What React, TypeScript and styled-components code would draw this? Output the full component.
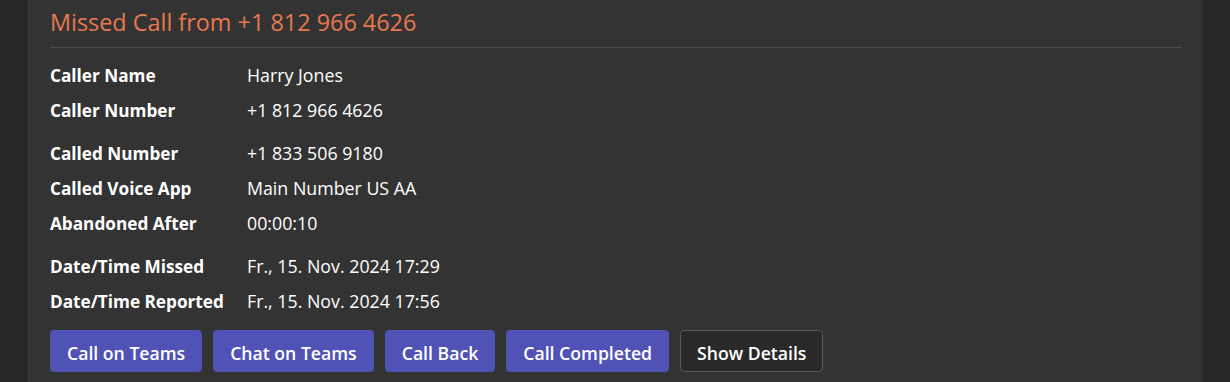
import React from "react";
import styled, { createGlobalStyle } from "styled-components";

const GlobalStyle = createGlobalStyle`
  html, body {
    margin: 0;
    padding: 0;
    background: #272727;
    font-family: "Open Sans", "Noto Sans", sans-serif;
  }
`;

const Page = styled.div`
  height: 382px;
  padding: 0 26px 0 27px;
  overflow: hidden;
`;

const Card = styled.section`
  height: 100%;
  background: #333333;
  border-left: 1px solid #2c2c2c;
  border-right: 1px solid #2a2a2a;
  padding: 6px 21px 0 22px;
  box-sizing: border-box;
`;

const Title = styled.h2`
  margin: 0;
  padding-bottom: 9px;
  font-size: 23.4px;
  font-weight: 400;
  line-height: 32px;
  color: #e8784f;
  border-bottom: 1px solid #4b4b4b;
`;

const Details = styled.div`
  padding-top: 9px;
  display: flex;
  flex-direction: column;
  gap: 8px;
`;

const Group = styled.dl`
  margin: 0;
  display: grid;
  grid-template-columns: 197px 1fr;
  grid-auto-rows: 35px;
  align-items: center;
`;

const Label = styled.dt`
  font-size: 17.2px;
  font-weight: 700;
  color: #ffffff;
  padding-top: 1px;
`;

const Value = styled.dd`
  margin: 0;
  font-size: 17.8px;
  font-weight: 400;
  color: #ffffff;
`;

const Actions = styled.div`
  display: flex;
  gap: 11px;
  margin-top: 12px;
`;

const Button = styled.button<{ $secondary?: boolean }>`
  height: 42px;
  padding: 3px 16px 0;
  border-radius: 4px;
  border: 1px solid ${(p) => (p.$secondary ? "#5a5a5a" : "#5053b5")};
  background: ${(p) => (p.$secondary ? "#292929" : "#5053b5")};
  color: #ffffff;
  font-family: inherit;
  font-size: 17.65px;
  font-weight: 600;
  cursor: pointer;
`;

const groups: [string, string][][] = [
  [
    ["Caller Name", "Harry Jones"],
    ["Caller Number", "+1 812 966 4626"],
  ],
  [
    ["Called Number", "+1 833 506 9180"],
    ["Called Voice App", "Main Number US AA"],
    ["Abandoned After", "00:00:10"],
  ],
  [
    ["Date/Time Missed", "Fr., 15. Nov. 2024 17:29"],
    ["Date/Time Reported", "Fr., 15. Nov. 2024 17:56"],
  ],
];

export default function App() {
  return (
    <>
      <GlobalStyle />
      <Page>
        <Card>
          <Title>Missed Call from +1 812 966 4626</Title>
          <Details>
            {groups.map((rows, i) => (
              <Group key={i}>
                {rows.map(([k, v]) => (
                  <React.Fragment key={k}>
                    <Label>{k}</Label>
                    <Value>{v}</Value>
                  </React.Fragment>
                ))}
              </Group>
            ))}
          </Details>
          <Actions>
            <Button>Call on Teams</Button>
            <Button>Chat on Teams</Button>
            <Button>Call Back</Button>
            <Button>Call Completed</Button>
            <Button $secondary>Show Details</Button>
          </Actions>
        </Card>
      </Page>
    </>
  );
}
